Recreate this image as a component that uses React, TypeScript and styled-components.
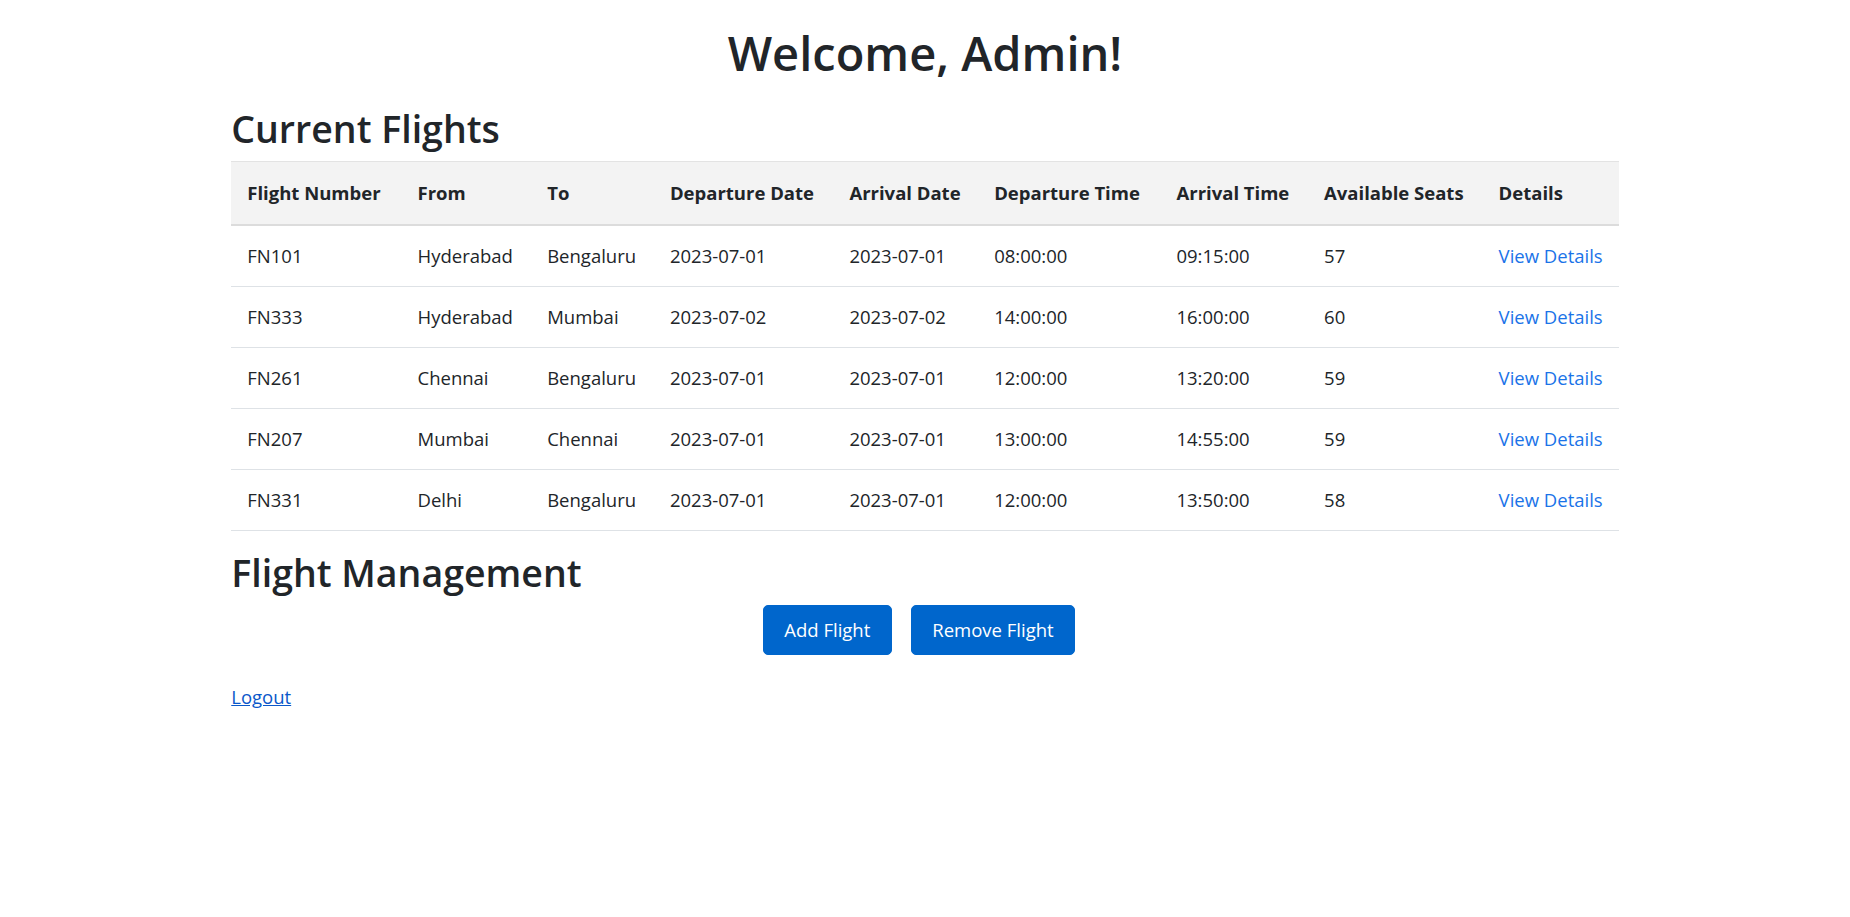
import React from 'react'
import styled, { createGlobalStyle } from 'styled-components'

const GlobalStyle = createGlobalStyle`
  * { box-sizing: border-box; }
  body {
    margin: 0;
    background: #ffffff;
    color: #212529;
    font-family: "Open Sans", "Noto Sans", sans-serif;
    font-size: 18.5px;
    line-height: 30px;
  }
`

const Wrap = styled.div`
  width: 75%;
  margin: 0 auto;
`
const Title = styled.h1`
  font-size: 47px;
  font-weight: 600;
  line-height: 60px;
  text-align: center;
  margin: 23px 0 22px;
`
const SectionTitle = styled.h2`
  font-size: 37.5px;
  font-weight: 600;
  line-height: 48px;
  margin: 0 0 8px;
`
const Table = styled.table`
  width: 100%;
  border-collapse: collapse;
  margin-bottom: 18px;
  th, td {
    padding: 15px 16px;
    text-align: left;
    vertical-align: middle;
    white-space: nowrap;
  }
  thead tr {
    background: #f3f3f3;
    border-top: 1px solid #e3e3e3;
    border-bottom: 2px solid #dcdcdc;
  }
  th {
    font-weight: 700;
    padding-top: 16px;
    padding-bottom: 16px;
  }
  tbody tr { border-bottom: 1px solid #dee2e6; }
`
const Th = styled.th<{ $w: number }>`
  width: ${p => p.$w}px;
`
const DetailsLink = styled.a`
  color: #1a73e8;
  text-decoration: none;
  cursor: pointer;
`
const Actions = styled.div`
  display: flex;
  justify-content: center;
  gap: 19px;
  padding-right: 12px;
  margin: 6px 0 27px;
`
const Button = styled.button`
  font-family: inherit;
  font-size: 18.5px;
  line-height: 30px;
  color: #ffffff;
  background: #0066cc;
  border: 1px solid #0066cc;
  border-radius: 5px;
  padding: 9px 20.5px;
  cursor: pointer;
`
const Logout = styled.a`
  color: #0a58ca;
  text-decoration: underline;
  cursor: pointer;
`

const columns: [string, number][] = [
  ['Flight Number', 171],
  ['From', 130],
  ['To', 123],
  ['Departure Date', 180],
  ['Arrival Date', 145],
  ['Departure Time', 183],
  ['Arrival Time', 148],
  ['Available Seats', 175],
  ['Details', 133],
]

const flights = [
  ['FN101', 'Hyderabad', 'Bengaluru', '2023-07-01', '2023-07-01', '08:00:00', '09:15:00', '57'],
  ['FN333', 'Hyderabad', 'Mumbai', '2023-07-02', '2023-07-02', '14:00:00', '16:00:00', '60'],
  ['FN261', 'Chennai', 'Bengaluru', '2023-07-01', '2023-07-01', '12:00:00', '13:20:00', '59'],
  ['FN207', 'Mumbai', 'Chennai', '2023-07-01', '2023-07-01', '13:00:00', '14:55:00', '59'],
  ['FN331', 'Delhi', 'Bengaluru', '2023-07-01', '2023-07-01', '12:00:00', '13:50:00', '58'],
]

export default function App() {
  return (
    <>
      <GlobalStyle />
      <Wrap>
        <Title>Welcome, Admin!</Title>
        <SectionTitle>Current Flights</SectionTitle>
        <Table>
          <thead>
            <tr>
              {columns.map(([name, w]) => (
                <Th key={name} $w={w}>{name}</Th>
              ))}
            </tr>
          </thead>
          <tbody>
            {flights.map(f => (
              <tr key={f[0]}>
                {f.map((v, i) => <td key={i}>{v}</td>)}
                <td><DetailsLink>View Details</DetailsLink></td>
              </tr>
            ))}
          </tbody>
        </Table>
        <SectionTitle>Flight Management</SectionTitle>
        <Actions>
          <Button>Add Flight</Button>
          <Button>Remove Flight</Button>
        </Actions>
        <Logout>Logout</Logout>
      </Wrap>
    </>
  )
}
